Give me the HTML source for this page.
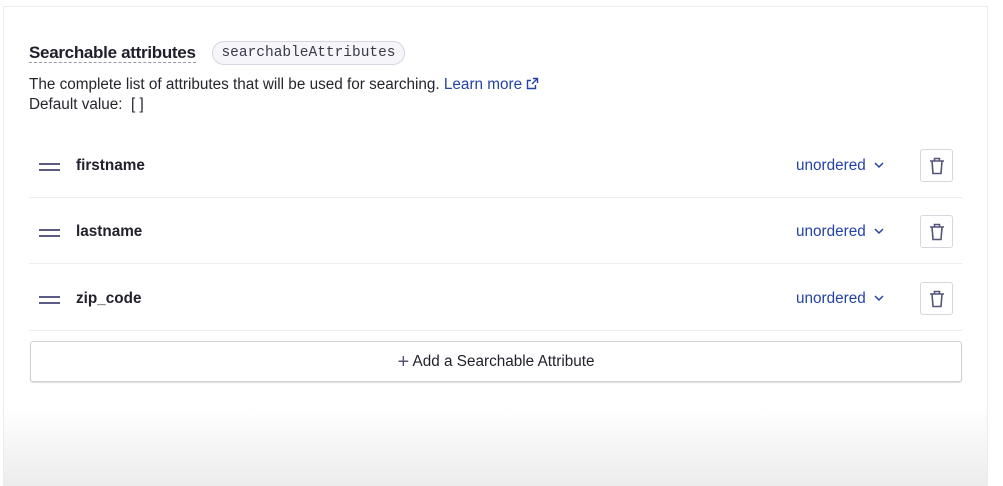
<!DOCTYPE html>
<html><head><style>
*{box-sizing:border-box;margin:0;padding:0}
body{width:1003px;height:481px;overflow:hidden;background:#fff;font-family:"Liberation Sans",sans-serif;color:#22222a;position:relative}
.card{position:absolute;left:3px;top:6px;width:985px;height:480px;border-left:1px solid #ececf0;border-top:1px solid #ececf0;border-right:1px solid #ececf0;background:linear-gradient(#fff 0,#fff 400px,#ececed 480px)}
.title{position:absolute;left:29px;top:43px;font-size:17px;font-weight:bold;color:#1f1f2c;border-bottom:1px dashed #9a9aa8;line-height:19px;letter-spacing:-0.3px}
.pill{position:absolute;left:212px;top:41px;width:193px;height:24px;border:1px solid #d6d6e0;border-radius:12px;background:#f5f5fa;font-family:"Liberation Mono",monospace;font-size:14.5px;line-height:22px;text-align:center;color:#3a3a4a}
.desc{position:absolute;left:29px;top:75px;font-size:15.3px;line-height:20px;color:#25252e}
.desc a{color:#2443a8;text-decoration:none}
.row{position:absolute;left:29px;width:933px;height:66px;border-bottom:1px solid #ededf1}
.hand{position:absolute;left:10px;top:31px;width:21px;height:8px;border-top:2px solid #5b5b85;border-bottom:2px solid #5b5b85}
.name{position:absolute;left:47px;top:25px;font-size:15.3px;font-weight:bold;color:#22222c}
.ord{position:absolute;left:767px;top:25px;font-size:15.3px;color:#2443a8}
.ord svg{position:absolute;left:78px;top:5px}
.trash{position:absolute;left:891px;top:17px;width:33px;height:33px;border:1px solid #d6d6de;border-radius:3px;background:#fff}
.trash svg{position:absolute;left:8px;top:7px}
.add{position:absolute;left:30px;top:341px;width:932px;height:41px;border:1px solid #cfcfd7;border-radius:3px;background:#fff;box-shadow:0 1px 1px #ddd;text-align:center;font-size:15.3px;line-height:39px;color:#22222c}
</style></head><body>
<div class="card"></div>
<div class="title">Searchable attributes</div>
<div class="pill">searchableAttributes</div>
<div class="desc">The complete list of attributes that will be used for searching. <a>Learn more <svg width="13" height="13" viewBox="0 0 13 13" style="vertical-align:-1px"><path d="M7 1.5h4.5V6M11.5 1.5L6 7M9.5 8v3.5h-8v-8H5" fill="none" stroke="#2443a8" stroke-width="1.4"/></svg></a><br>Default value:&nbsp; [ ]</div>
<div class="row" style="top:132px"><div class="hand"></div><div class="name">firstname</div><div class="ord">unordered<svg width="10" height="7" viewBox="0 0 10 7"><path d="M1 1l4 4 4-4" fill="none" stroke="#2443a8" stroke-width="1.5"/></svg></div><div class="trash"><svg width="16" height="18" viewBox="0 0 16 18"><path d="M1 4h14M5.5 4V1.5h5V4M3 4l1 12.5h8L13 4" fill="none" stroke="#55557a" stroke-width="1.6"/></svg></div></div>
<div class="row" style="top:198px"><div class="hand"></div><div class="name">lastname</div><div class="ord">unordered<svg width="10" height="7" viewBox="0 0 10 7"><path d="M1 1l4 4 4-4" fill="none" stroke="#2443a8" stroke-width="1.5"/></svg></div><div class="trash"><svg width="16" height="18" viewBox="0 0 16 18"><path d="M1 4h14M5.5 4V1.5h5V4M3 4l1 12.5h8L13 4" fill="none" stroke="#55557a" stroke-width="1.6"/></svg></div></div>
<div class="row" style="top:265px"><div class="hand"></div><div class="name">zip_code</div><div class="ord">unordered<svg width="10" height="7" viewBox="0 0 10 7"><path d="M1 1l4 4 4-4" fill="none" stroke="#2443a8" stroke-width="1.5"/></svg></div><div class="trash"><svg width="16" height="18" viewBox="0 0 16 18"><path d="M1 4h14M5.5 4V1.5h5V4M3 4l1 12.5h8L13 4" fill="none" stroke="#55557a" stroke-width="1.6"/></svg></div></div>
<div class="add"><span style="font-size:20px;color:#55557a;vertical-align:-2px">+</span> Add a Searchable Attribute</div>
</body></html>
